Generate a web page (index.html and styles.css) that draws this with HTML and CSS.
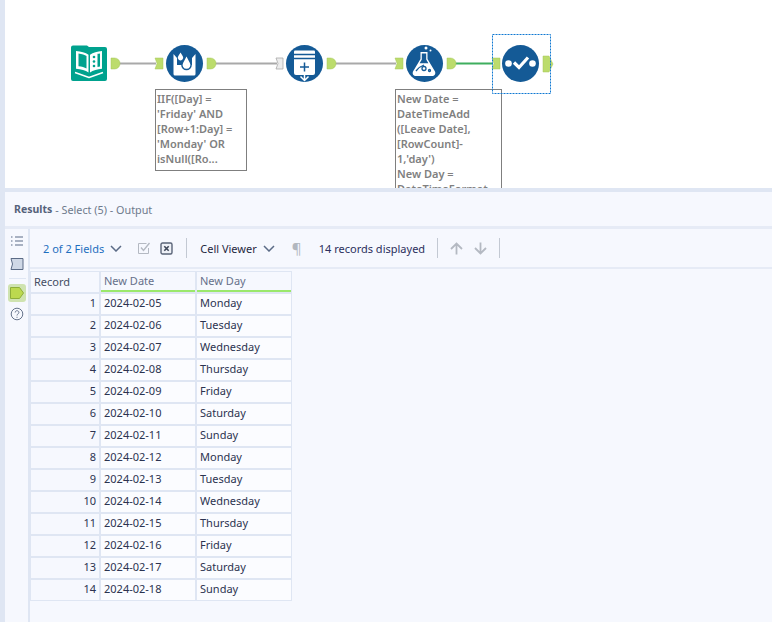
FILE: index.html
```html
<!DOCTYPE html>
<html lang="en">
<head>
<meta charset="utf-8">
<title>Results - Select (5) - Output</title>
<link rel="stylesheet" href="styles.css">
</head>
<body>
<div class="app">
  <section class="canvas">
    <svg class="flow" width="767" height="188" viewBox="5 0 767 188" aria-hidden="true">
      <!-- connectors -->
      <path class="wire" d="M118 63.500H156M214 63.500H277M334 63.500H396"/>
      <path class="wire-on" d="M454 63.500H493"/>
      <!-- input tool -->
      <path class="teal" d="M73 45.500h14l2 1.500h16a2 2 0 0 1 2 2V79a2 2 0 0 1-2 2H73a2 2 0 0 1-2-2V47.500a2 2 0 0 1 2-2z"/>
      <path class="glyph" d="M76 51c5 .3 9.500 1.500 12.500 3.800V72.500c-3-2.200-7.500-3.400-12.500-3.700z"/>
      <path class="teal" d="M78.500 53.500c3.500.4 6.300 1.300 8 2.600V68.500c-2-1.200-4.700-2-8-2.300z"/>
      <path class="glyph" d="M90 54.800c3-2.300 7.500-3.500 12-3.800v17.800c-4.500.3-9 1.500-12 3.700z"/>
      <path class="teal" d="M97.500 53.800c1-.2 1.800-.3 2.500-.4v13.200c-.8.100-1.600.2-2.500.4z"/>
      <circle class="teal" cx="94" cy="57" r="1.300"/><circle class="teal" cx="94" cy="61.500" r="1.300"/><circle class="teal" cx="94" cy="66" r="1.300"/>
      <path class="ln" d="M75 72.500l14 5 14-5"/>

      <!-- output and input anchors -->
      <path class="anchor" d="M111 58h3.500a5.500 5.500 0 0 1 0 11H111z"/>
      <path class="anchor" d="M155 58h8v11h-8l2-5.500z"/>
      <path class="anchor" d="M207 58h3.500a5.500 5.500 0 0 1 0 11H207z"/>
      <path class="anchor-off" d="M276 58h7v11h-7l2-5.500z"/>
      <path class="anchor" d="M327 58h3.500a5.500 5.500 0 0 1 0 11H327z"/>
      <path class="anchor" d="M395 58h8v11h-8l2-5.500z"/>
      <path class="anchor" d="M447 58h3.500a5.500 5.500 0 0 1 0 11H447z"/>
      <path class="anchor" d="M492 58h8v11h-8l2-5.500z"/>
      <path class="anchor" d="M543 56h6l4 8-4 8h-6z"/>

      <!-- filter tool -->
      <circle class="disc" cx="184.500" cy="63.500" r="18.500"/>
      <path class="glyph" d="M173.500 54l3.500 4v7h15v-7l3.500-4V74a1.500 1.500 0 0 1-1.500 1.500H175a1.500 1.500 0 0 1-1.500-1.500z"/>
      <circle class="disc" cx="186.500" cy="65" r="5.300"/>
      <path class="glyph" d="M186.500 56.500l3.400 6.500a3.900 3.900 0 1 1-6.800 0z"/>
      <path class="glyph" d="M180.500 52.500l2.300 3.800a2.700 2.700 0 1 1-4.600 0z"/>

      <!-- sample tool -->
      <circle class="disc" cx="304.500" cy="63.500" r="18.500"/>
      <path class="glyph" d="M295 50.500h19a1 1 0 0 1 1 1V73a2 2 0 0 1-2 2h-17a2 2 0 0 1-2-2V51.500a1 1 0 0 1 1-1z"/>
      <path class="bar" d="M294 54.500H315M294 58.500H315M304.500 62.500V71.500M300 67H309"/>
      <path class="arrow" d="M304.500 74V80M300.500 76.500l4 4 4-4"/>

      <!-- formula tool -->
      <circle class="disc" cx="424.500" cy="63.500" r="18.500"/>
      <path class="glyph" d="M420.500 52h7v7l7.500 12.500c1 2.500-.5 4.500-3 4.500h-16c-2.500 0-4-2-3-4.500l7.500-12.500z"/>
      <path class="disc" d="M421.800 53.500h4.400v6l2.200 3.700h-8.800l2.200-3.700z"/>
      <path class="disc-ln" d="M416 71c3-4 5-5 8-6"/>
      <circle class="disc-ln" cx="424" cy="68.500" r="2"/><circle class="disc-ln" cx="429.500" cy="70.500" r="1"/>
      <circle class="glyph" cx="426" cy="48" r="1.500"/><circle class="glyph" cx="430.500" cy="50.500" r="1"/>

      <!-- select tool -->
      <circle class="disc" cx="520.500" cy="63.500" r="18.500"/>
      <circle class="glyph" cx="508.500" cy="63.500" r="3.300"/><circle class="glyph" cx="532.500" cy="63.500" r="3.300"/>
      <path class="tick" d="M514 62.500l5 5 9-10"/>

      <!-- selection marquee -->
      <rect class="marquee" x="492.500" y="34.500" width="58" height="59"/>
    </svg>
    <p class="note note-filter">IIF([Day] = 'Friday' AND [Row+1:Day] = 'Monday' OR isNull([Ro...</p>
    <p class="note note-formula">New Date = DateTimeAdd ([Leave Date], [RowCount]- 1,'day')<br>New Day = DateTimeFormat ([New Date],'%A')</p>
  </section>

  <section class="results">
    <header class="results-head"><b>Results</b><span>- Select (5) - Output</span></header>
    <div class="results-body">
      <aside class="side">
        <svg class="side-ic" width="14" height="12" viewBox="0 0 14 12" aria-hidden="true"><path d="M1 2h1.500M1 6h1.500M1 10h1.500M5 2h8M5 6h8M5 10h8"/></svg>
        <svg class="side-tag" width="14" height="14" viewBox="0 0 14 14" aria-hidden="true"><path d="M1 1.500h12v11H1l1.500-5.500z"/></svg>
        <i class="side-sep"></i>
        <span class="side-on"><svg width="14" height="12" viewBox="0 0 14 12" aria-hidden="true"><path d="M.5.500h9l4 5.500-4 5.500h-9z"/></svg></span>
        <svg class="side-help" width="14" height="14" viewBox="0 0 14 14" aria-hidden="true"><circle cx="7" cy="7" r="5.800"/><path d="M5.200 5.500c0-2.400 3.700-2.400 3.700 0 0 1.400-1.900 1.400-1.900 3"/><path d="M7 9.800v1"/></svg>
      </aside>
      <div class="main">
        <div class="toolbar">
          <span class="fields">2 of 2 Fields</span>
          <svg class="chev" width="12" height="7" viewBox="0 0 12 7" aria-hidden="true"><path d="M1 1l5 5 5-5"/></svg>
          <svg class="t-check" width="14" height="14" viewBox="0 0 14 14" aria-hidden="true"><path class="box" d="M11.500 7v5.500h-10v-10h8"/><path class="mark" d="M4 6.500l2.500 3 6-7.500"/></svg>
          <svg class="t-x" width="13" height="13" viewBox="0 0 13 13" aria-hidden="true"><rect x="1" y="1" width="11" height="11" rx="1.500"/><path d="M4.300 4.300l4.400 4.400M8.700 4.300l-4.400 4.400"/></svg>
          <i class="vr vr-a"></i>
          <span class="viewer">Cell Viewer</span>
          <svg class="chev" width="12" height="7" viewBox="0 0 12 7" aria-hidden="true"><path d="M1 1l5 5 5-5"/></svg>
          <span class="pilcrow">¶</span>
          <span class="count">14 records displayed</span>
          <i class="vr vr-b"></i>
          <svg class="nav nav-up" width="13" height="13" viewBox="0 0 13 13" aria-hidden="true"><path d="M6.500 12.500V1.500M1 7l5.500-5.500L12 7"/></svg>
          <svg class="nav nav-down" width="13" height="13" viewBox="0 0 13 13" aria-hidden="true"><path d="M6.500.5v11M1 6l5.500 5.500L12 6"/></svg>
          <i class="vr vr-c"></i>
        </div>
        <div class="grid">
          <div class="hd">Record</div><div class="hd on">New Date</div><div class="hd on">New Day</div>
          <div class="num">1</div><div class="c">2024-02-05</div><div class="c">Monday</div>
          <div class="num">2</div><div class="c">2024-02-06</div><div class="c">Tuesday</div>
          <div class="num">3</div><div class="c">2024-02-07</div><div class="c">Wednesday</div>
          <div class="num">4</div><div class="c">2024-02-08</div><div class="c">Thursday</div>
          <div class="num">5</div><div class="c">2024-02-09</div><div class="c">Friday</div>
          <div class="num">6</div><div class="c">2024-02-10</div><div class="c">Saturday</div>
          <div class="num">7</div><div class="c">2024-02-11</div><div class="c">Sunday</div>
          <div class="num">8</div><div class="c">2024-02-12</div><div class="c">Monday</div>
          <div class="num">9</div><div class="c">2024-02-13</div><div class="c">Tuesday</div>
          <div class="num">10</div><div class="c">2024-02-14</div><div class="c">Wednesday</div>
          <div class="num">11</div><div class="c">2024-02-15</div><div class="c">Thursday</div>
          <div class="num">12</div><div class="c">2024-02-16</div><div class="c">Friday</div>
          <div class="num">13</div><div class="c">2024-02-17</div><div class="c">Saturday</div>
          <div class="num">14</div><div class="c">2024-02-18</div><div class="c">Sunday</div>
        </div>
      </div>
    </div>
  </section>
</div>
</body>
</html>
```

FILE: styles.css
```css
* { box-sizing: border-box; }
html, body { margin: 0; height: 100%; overflow: hidden; }
body {
  font-family: "Noto Sans", "Open Sans", "Liberation Sans", sans-serif;
  font-size: 11px;
  color: #2b3350;
  background: #f6f8fe;
}
.app {
  height: 622px;
  border-left: 5px solid #dfe6f3;
  display: flex;
  flex-direction: column;
}

/* canvas */
.canvas {
  position: relative;
  height: 188px;
  flex: none;
  background: #fff;
  overflow: hidden;
}
.flow { position: absolute; left: 0; top: 0; display: block; z-index: 1; pointer-events: none; }
.wire { fill: none; stroke: #a9a9a9; stroke-width: 2; }
.wire-on { fill: none; stroke: #3fae5e; stroke-width: 2; }
.teal { fill: #00a28e; }
.ln { fill: none; stroke: #fff; stroke-width: 1.400; stroke-linejoin: round; }
.anchor { fill: #bcdc6c; stroke: #a5c75a; stroke-width: .5; }
.anchor-off { fill: #ececec; stroke: #a9a9a9; stroke-width: .8; }
.disc { fill: #145a96; }
.disc-ln { fill: none; stroke: #145a96; stroke-width: 1.300; }
.glyph { fill: #fff; }
.bar { fill: none; stroke: #145a96; stroke-width: 1.500; }
.arrow { fill: none; stroke: #fff; stroke-width: 1.500; }
.tick { fill: none; stroke: #fff; stroke-width: 3.200; }
.marquee { fill: none; stroke: #0f78d2; stroke-width: 1; stroke-dasharray: 2 1; }
.note {
  position: absolute;
  top: 89px;
  margin: 0;
  padding: 1px 1px 0 1px;
  background: #fff;
  border: 1px solid #7f7f7f;
  color: #808080;
  font-weight: 600;
  font-size: 11px;
  line-height: 15px;
}
.note-filter { left: 150px; width: 92px; height: 82px; }
.note-formula { left: 390px; width: 107px; height: 130px; }

/* results */
.results {
  flex: 1;
  display: flex;
  flex-direction: column;
  min-height: 0;
  border-top: 4px solid #dfe6f3;
}
.results-head {
  height: 37px;
  flex: none;
  display: flex;
  align-items: center;
  gap: 3px;
  padding: 0 0 0 9px;
  border-bottom: 3px solid #e6ebf6;
  font-size: 10.800px;
  color: #6e7a8c;
}
.results-head b { color: #55627a; font-weight: 700; font-size: 10.500px; }
.results-body { flex: 1; display: flex; min-height: 0; }

.side {
  width: 25px;
  flex: none;
  border-right: 2px solid #dfe6f3;
  display: flex;
  flex-direction: column;
  align-items: center;
  padding: 6px 0 0 1px;
}
.side-ic path { fill: none; stroke: #5b6b86; stroke-width: 1; }
.side-tag { margin-top: 10px; }
.side-tag path { fill: #cfd8e6; stroke: #5b6b86; stroke-width: 1; }
.side-sep { width: 17px; height: 1px; background: #dfe6f3; margin-top: 7px; }
.side-on {
  width: 18px;
  height: 18px;
  margin-top: 5px;
  border-radius: 3px;
  background: #cfe3b0;
  display: flex;
  align-items: center;
  justify-content: center;
}
.side-on path { fill: #bcd94f; stroke: #8eae3a; stroke-width: 1; }
.side-help { margin-top: 5px; }
.side-help circle, .side-help path { fill: none; stroke: #66748c; stroke-width: 1; }

.main { flex: 1; min-width: 0; }
.toolbar {
  height: 40px;
  display: flex;
  align-items: center;
  padding: 0 0 0 13px;
  border-bottom: 2px solid #e6ebf6;
}
.fields { color: #1e6fbf; }
.chev { margin-left: 6px; }
.chev path { fill: none; stroke: #5b6b86; stroke-width: 1.500; }
.t-check { margin-left: 15px; }
.t-check .box { fill: none; stroke: #b4b9c2; stroke-width: 1; }
.t-check .mark { fill: none; stroke: #b4b9c2; stroke-width: 1.400; }
.t-x { margin-left: 9px; }
.t-x rect { fill: #eef1f7; stroke: #5a6478; stroke-width: 1.400; }
.t-x path { fill: none; stroke: #3d4658; stroke-width: 1.600; }
.vr { width: 1px; height: 20px; background: #c3c9d3; flex: none; }
.vr-a { margin-left: 13px; }
.viewer { margin-left: 13px; color: #1f2740; }
.pilcrow { margin-left: 17px; color: #b2b7bf; font-size: 15px; line-height: 1; width: 11px; }
.count { margin-left: 16px; color: #2b2f5c; }
.vr-b { margin-left: 12px; }
.nav path { fill: none; stroke: #b4b9c2; stroke-width: 1.800; }
.nav-up { margin-left: 12px; }
.nav-down { margin-left: 11px; }
.vr-c { margin-left: 12px; }

.grid {
  margin-top: 2px;
  width: 262px;
  display: grid;
  grid-template-columns: 68px 94px 94px;
  grid-auto-rows: 20px;
  gap: 2px;
  padding: 1px;
  background: #dfe6f3;
}
.grid > div {
  display: flex;
  align-items: center;
  padding: 0 3px 3px;
  background: #f6f8fe;
  white-space: nowrap;
}
.grid .hd { color: #444d63; padding-bottom: 1px; }
.grid .on { color: #66708a; border-bottom: 2px solid #9be86c; }
.grid .num { justify-content: flex-end; }
.grid .c { background: #fbfcff; }
```
